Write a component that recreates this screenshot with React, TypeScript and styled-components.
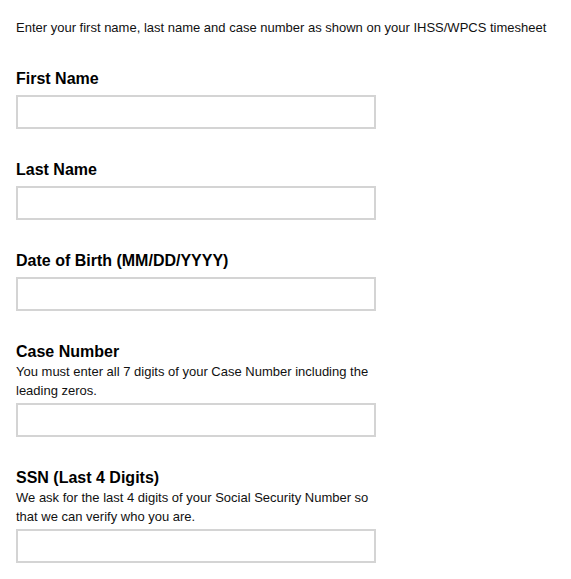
import React from 'react'
import styled, { createGlobalStyle } from 'styled-components'

const GlobalStyle = createGlobalStyle`
  body {
    margin: 0;
    background: #fff;
    font-family: 'Liberation Sans', Arial, sans-serif;
  }
`

const Page = styled.div`
  padding: 18px 16px 16px;
`

const Intro = styled.p`
  margin: 0 0 32px;
  font-size: 13px;
  line-height: 19px;
  color: #111;
`

const Form = styled.form`
  display: flex;
  flex-direction: column;
  gap: 31px;
`

const Field = styled.div`
  display: flex;
  flex-direction: column;
`

const Label = styled.label<{ $hasHelp?: boolean }>`
  font-size: 16px;
  font-weight: bold;
  line-height: 20px;
  color: #000;
  margin-bottom: ${(p) => (p.$hasHelp ? '0' : '6px')};
`

const Help = styled.div`
  width: 360px;
  font-size: 13px;
  line-height: 19px;
  color: #111;
  margin-bottom: 3px;
`

const Input = styled.input`
  box-sizing: border-box;
  width: 360px;
  height: 34px;
  border: 2px solid #d4d4d4;
  border-radius: 0;
  padding: 4px 8px;
  font-size: 14px;
  font-family: inherit;
  background: #fff;
  outline: none;
`

type FieldProps = {
  id: string
  label: string
  help?: string
}

const FormField: React.FC<FieldProps> = ({ id, label, help }) => (
  <Field>
    <Label htmlFor={id} $hasHelp={!!help}>
      {label}
    </Label>
    {help && <Help>{help}</Help>}
    <Input id={id} type="text" />
  </Field>
)

const fields: FieldProps[] = [
  { id: 'first', label: 'First Name' },
  { id: 'last', label: 'Last Name' },
  { id: 'dob', label: 'Date of Birth (MM/DD/YYYY)' },
  {
    id: 'case',
    label: 'Case Number',
    help: 'You must enter all 7 digits of your Case Number including the leading zeros.',
  },
  {
    id: 'ssn',
    label: 'SSN (Last 4 Digits)',
    help: 'We ask for the last 4 digits of your Social Security Number so that we can verify who you are.',
  },
]

const App: React.FC = () => (
  <>
    <GlobalStyle />
    <Page>
      <Intro>Enter your first name, last name and case number as shown on your IHSS/WPCS timesheet</Intro>
      <Form>
        {fields.map((f) => (
          <FormField key={f.id} {...f} />
        ))}
      </Form>
    </Page>
  </>
)

export default App
